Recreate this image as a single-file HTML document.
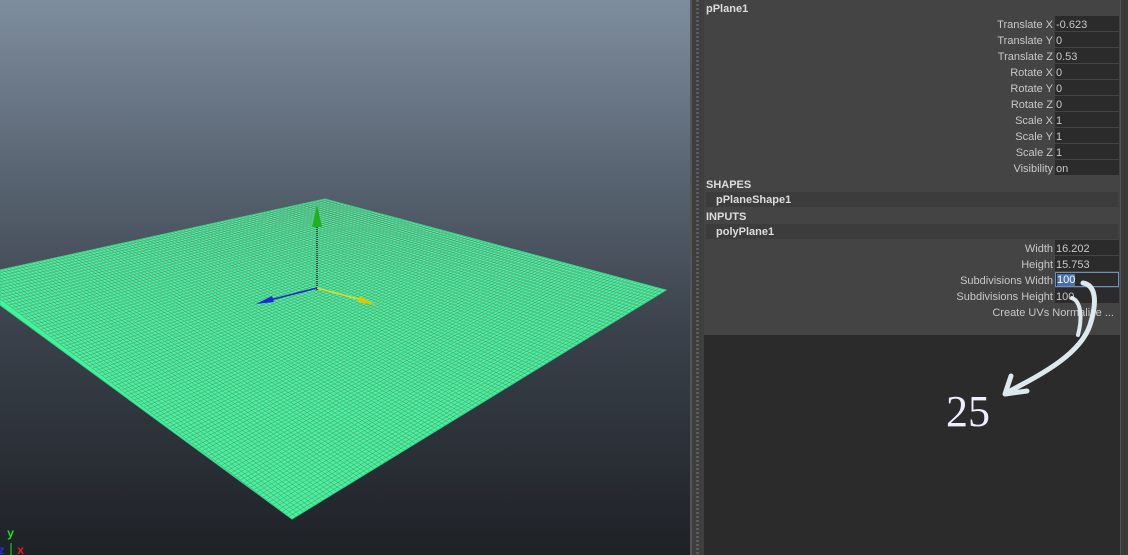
<!DOCTYPE html>
<html><head><style>
body{margin:0;width:1128px;height:555px;overflow:hidden;position:relative;background:#2b2b2b;font-family:"Liberation Sans",sans-serif;}
#vp{position:absolute;left:0;top:0;width:690px;height:555px;background:linear-gradient(#7e8d9d 0%,#5a6674 30%,#3a414a 60%,#1e2126 100%);}
#split{position:absolute;left:690px;top:0;width:14px;height:555px;background:#3e3e3e;border-left:2px solid #555;box-sizing:border-box;}
#split:after{content:"";position:absolute;left:4px;top:0;width:3px;height:555px;background:repeating-linear-gradient(#5a5a5a 0 2px,#3e3e3e 2px 4px);}
#panel{position:absolute;left:704px;top:0;width:416px;height:335px;background:#444;}
#lower{position:absolute;left:704px;top:335px;width:416px;height:220px;background:#2b2b2b;}
#sb{position:absolute;left:1120px;top:0;width:8px;height:555px;background:#3a3a3a;border-left:1px solid #555;box-sizing:border-box;}
.h{position:absolute;left:706px;font-weight:bold;font-size:11px;color:#ddd;}
.sub{position:absolute;left:706px;width:412px;height:15px;background:#3c3c3c;font-weight:bold;font-size:11px;color:#ddd;padding-left:10px;box-sizing:border-box;line-height:17px;}
.r{position:absolute;left:704px;width:351px;text-align:right;font-size:11px;color:#c8c8c8;padding-right:2px;box-sizing:border-box;margin-top:2px;}
.f{position:absolute;left:1055px;width:64px;height:15px;background:#2b2b2b;font-size:11px;color:#c8c8c8;line-height:18px;padding-left:1px;box-sizing:border-box;}
</style></head><body>
<div id="vp"></div>
<svg style="position:absolute;left:0;top:0" width="690" height="555">
<polygon points="0,270 325,199 666,290 292,519 0,305" fill="#40f59c"/>
<g id="g" stroke="#8a3a5a" stroke-width="0.5" opacity="0.6"></g>
<polygon points="0,270 325,199 666,290 292,519 0,305" fill="none" stroke="#3ad088" stroke-width="1"/>
<line x1="317" y1="290" x2="317" y2="215" stroke="#222" stroke-width="1.5" stroke-dasharray="1 1"/>
<polygon points="317,205 312,227 322,227" fill="#1fb020"/>
<line x1="317" y1="288" x2="270" y2="300" stroke="#22c" stroke-width="1.5"/>
<polygon points="256,304 272,296 274,302" fill="#1a2ad8"/>
<line x1="317" y1="288" x2="362" y2="300" stroke="#dd2" stroke-width="1.5"/>
<polygon points="376,305 360,296 358,302" fill="#e0c800"/>
<text x="7" y="537" fill="#20e020" font-size="12" font-family="Liberation Mono" font-weight="bold">y</text>
<line x1="11" y1="543" x2="11" y2="555" stroke="#20e020"/>
<text x="17" y="554" fill="#e02020" font-size="12" font-family="Liberation Mono" font-weight="bold">x</text>
<text x="-2" y="554" fill="#2030e0" font-size="12" font-family="Liberation Mono" font-weight="bold">z</text>
</svg>
<div id="split"></div>
<div id="panel"></div>
<div id="lower"></div>
<div id="sb"></div>
<div class="h" style="top:3px">pPlane1</div>
<div class="r" style="top:17px">Translate X</div><div class="f" style="top:16px">-0.623</div>
<div class="r" style="top:33px">Translate Y</div><div class="f" style="top:32px">0</div>
<div class="r" style="top:49px">Translate Z</div><div class="f" style="top:48px">0.53</div>
<div class="r" style="top:65px">Rotate X</div><div class="f" style="top:64px">0</div>
<div class="r" style="top:81px">Rotate Y</div><div class="f" style="top:80px">0</div>
<div class="r" style="top:97px">Rotate Z</div><div class="f" style="top:96px">0</div>
<div class="r" style="top:113px">Scale X</div><div class="f" style="top:112px">1</div>
<div class="r" style="top:129px">Scale Y</div><div class="f" style="top:128px">1</div>
<div class="r" style="top:145px">Scale Z</div><div class="f" style="top:144px">1</div>
<div class="r" style="top:161px">Visibility</div><div class="f" style="top:160px">on</div>
<div class="h" style="top:179px">SHAPES</div>
<div class="sub" style="top:192px">pPlaneShape1</div>
<div class="h" style="top:211px">INPUTS</div>
<div class="sub" style="top:224px">polyPlane1</div>
<div class="r" style="top:241px">Width</div><div class="f" style="top:240px">16.202</div>
<div class="r" style="top:257px">Height</div><div class="f" style="top:256px">15.753</div>
<div class="r" style="top:273px">Subdivisions Width</div><div class="f" style="top:272px;border:1px solid #6a8fc0;line-height:15px"><span style="background:#4a6fa8;color:#fff">100</span></div>
<div class="r" style="top:289px">Subdivisions Height</div><div class="f" style="top:288px">100</div>
<div class="r" style="top:305px;width:412px">Create UVs Normalize ...</div>
<svg style="position:absolute;left:0;top:0" width="1128" height="555">
<path d="M1083,283 C1095,285 1098,300 1090,325 C1080,355 1040,375 1008,392" fill="none" stroke="#dce9ee" stroke-width="5" stroke-linecap="round"/>
<path d="M1072,298 C1082,302 1082,320 1078,335" fill="none" stroke="#dce9ee" stroke-width="4" stroke-linecap="round"/>
<path d="M1011,376 L1005,394 L1027,391" fill="none" stroke="#dce9ee" stroke-width="5" stroke-linecap="round" stroke-linejoin="round"/>
<text x="946" y="426" fill="#eef" font-size="44" font-family="Liberation Serif">25</text>
</svg>
<script>
var g=document.getElementById('g'),P=[[325,199],[666,290],[292,519],[-30,276]],s='',N=100;
function L(a,b,t){return[a[0]+(b[0]-a[0])*t,a[1]+(b[1]-a[1])*t];}
for(var i=0;i<=N;i++){var t=i/N;var a=L(P[0],P[1],t),b=L(P[3],P[2],t);s+='<line x1="'+a[0]+'" y1="'+a[1]+'" x2="'+b[0]+'" y2="'+b[1]+'"/>';
a=L(P[0],P[3],t);b=L(P[1],P[2],t);s+='<line x1="'+a[0]+'" y1="'+a[1]+'" x2="'+b[0]+'" y2="'+b[1]+'"/>';}
g.innerHTML=s;
</script>
</body></html>
